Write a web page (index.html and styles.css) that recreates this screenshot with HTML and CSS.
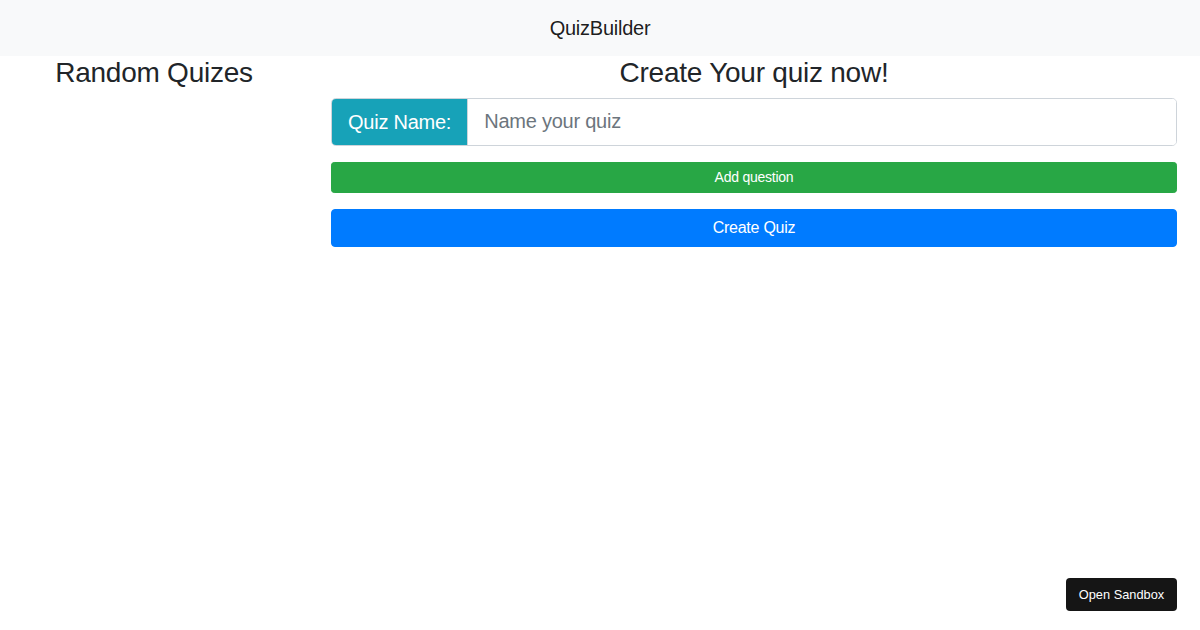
FILE: index.html
```html
<!DOCTYPE html>
<html lang="en">
<head>
<meta charset="utf-8">
<title>QuizBuilder</title>
<link rel="stylesheet" href="styles.css">
</head>
<body>
<nav class="navbar"><span class="brand">QuizBuilder</span></nav>
<main class="layout">
  <section class="side">
    <h3 class="title">Random Quizes</h3>
  </section>
  <section class="content">
    <h3 class="title">Create Your quiz now!</h3>
    <div class="input-group">
      <span class="input-label">Quiz Name:</span>
      <input class="input" type="text" placeholder="Name your quiz">
    </div>
    <button class="btn btn-success">Add question</button>
    <button class="btn btn-primary">Create Quiz</button>
  </section>
</main>
<button class="sandbox">Open Sandbox</button>
</body>
</html>
```

FILE: styles.css
```css
* { box-sizing: border-box; }
html, body { margin: 0; padding: 0; }
body {
  font-family: "Liberation Sans", Arial, sans-serif;
  font-size: 16px;
  line-height: 1.5;
  color: #212529;
  background: #fff;
  letter-spacing: -0.015em;
}
.navbar {
  height: 56px;
  background: #f8f9fa;
  display: flex;
  align-items: center;
  justify-content: center;
}
.brand {
  font-size: 20px;
  line-height: 30px;
  color: rgba(0,0,0,.9);
}
.layout {
  display: grid;
  grid-template-columns: 308px 1fr;
  column-gap: 23px;
  padding-right: 23px;
}
.title {
  margin: 0 0 8px;
  font-size: 28px;
  font-weight: 400;
  line-height: 1.2;
  text-align: center;
}
.content { display: flex; flex-direction: column; }
.input-group {
  display: flex;
  height: 48px;
  border: 1px solid #ced4da;
  border-radius: 4.8px;
  overflow: hidden;
}
.input-label {
  background: #17a2b8;
  color: #fff;
  font-size: 20px;
  line-height: 46px;
  padding: 0 16px;
  border-right: 1px solid #ced4da;
}
.input {
  flex: 1;
  border: 0;
  outline: 0;
  font-family: inherit;
  letter-spacing: inherit;
  font-size: 20px;
  padding: 0 16px;
  color: #495057;
  background: #fff;
}
.input::placeholder { color: #6c757d; opacity: 1; }
.btn {
  display: block;
  width: 100%;
  border: 1px solid transparent;
  color: #fff;
  font-family: inherit;
  letter-spacing: inherit;
  cursor: pointer;
  margin-top: 16px;
}
.btn-success {
  background: #28a745;
  border-color: #28a745;
  font-size: 14px;
  line-height: 21px;
  padding: 4px 8px;
  border-radius: 3.2px;
}
.btn-primary {
  background: #007bff;
  border-color: #007bff;
  font-size: 16px;
  line-height: 24px;
  padding: 6px 12px;
  border-radius: 4px;
}
.sandbox {
  position: fixed;
  right: 23px;
  bottom: 19px;
  width: 111px;
  height: 33px;
  background: #151515;
  color: #fff;
  border: 0;
  border-radius: 4px;
  font-family: "Liberation Sans", Arial, sans-serif;
  font-size: 12.8px;
  letter-spacing: 0;
  padding: 0;
}
```
